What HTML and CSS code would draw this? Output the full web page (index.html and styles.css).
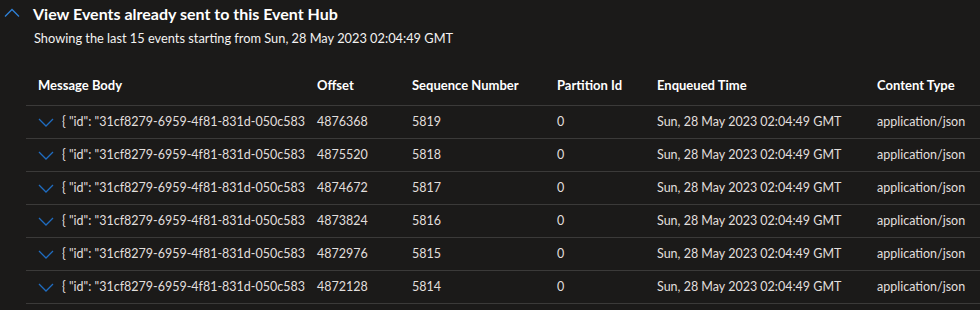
FILE: index.html
```html
<!DOCTYPE html>
<html lang="en">
<head>
  <meta charset="UTF-8" />
  <title>Event Hub events</title>
  <link rel="stylesheet" href="styles.css">
</head>
<body>

  <div class="section-head">
    <svg class="chevron-up" width="16" height="16" viewBox="0 0 16 16"><path d="M1 11.5 L8 4.5 L15 11.5" fill="none" stroke="#2f80d6" stroke-width="1.3"/></svg>
    <h2>View Events already sent to this Event Hub</h2>
  </div>
  <div class="subtitle">Showing the last 15 events starting from Sun, 28 May 2023 02:04:49 GMT</div>

  <table class="events">
    <colgroup>
      <col class="c-body"><col class="c-offset"><col class="c-seq"><col class="c-part"><col class="c-time"><col class="c-type">
    </colgroup>
    <thead>
      <tr>
        <th>Message Body</th>
        <th>Offset</th>
        <th>Sequence Number</th>
        <th>Partition Id</th>
        <th>Enqueued Time</th>
        <th>Content Type</th>
      </tr>
    </thead>
    <tbody id="rows"></tbody>
  </table>

  <script>
    // Build the event rows
    const events = [
      [4876368, 5819], [4875520, 5818], [4874672, 5817],
      [4873824, 5816], [4872976, 5815], [4872128, 5814]
    ];
    const chevron = '<svg class="chevron-down" width="16" height="16" viewBox="0 0 16 16"><path d="M1 5 L8 12 L15 5" fill="none" stroke="#1f6cc0" stroke-width="1.3"/></svg>';
    const rows = document.getElementById('rows');
    events.forEach(([offset, seq]) => {
      const tr = document.createElement('tr');
      tr.innerHTML = `
        <td class="body-td"><div class="body-cell">${chevron}<span>{ "id": "31cf8279-6959-4f81-831d-050c583</span></div></td>
        <td>${offset}</td>
        <td>${seq}</td>
        <td>0</td>
        <td>Sun, 28 May 2023 02:04:49 GMT</td>
        <td>application/json</td>
      `;
      rows.appendChild(tr);
    });
  </script>

</body>
</html>
```

FILE: styles.css
```css
* {
  box-sizing: border-box;
}
body {
  margin: 0;
  background: #1b1a19;
  color: #f3f2f1;
  font-family: 'Segoe UI', 'Lato', 'Liberation Sans', sans-serif;
  font-size: 12.5px;
  overflow: hidden;
}

/* Section header */
.section-head {
  display: flex;
  align-items: center;
  height: 26px;
  padding-left: 4px;
  gap: 13px;
}
.section-head h2 {
  margin: 0;
  font-size: 16px;
  font-weight: 700;
  color: #fff;
}
.subtitle {
  padding-left: 34px;
  margin-top: 4px;
  font-size: 12.8px;
  color: #f3f2f1;
}

/* Table */
.events {
  margin: 22px 0 0 26px;
  width: 954px;
  border-collapse: collapse;
  table-layout: fixed;
}
.c-body { width: 279px; }
.c-offset { width: 95px; }
.c-seq { width: 145px; }
.c-part { width: 100px; }
.c-time { width: 220px; }
.c-type { width: 115px; }

.events th {
  text-align: left;
  font-size: 13px;
  font-weight: 700;
  color: #fff;
  height: 37px;
  padding: 0 12px 3px;
  border-bottom: 1px solid #3b3a39;
  white-space: nowrap;
}
.events td {
  height: 33px;
  padding: 0 12px;
  border-bottom: 1px solid #3b3a39;
  color: #e1dfdd;
  white-space: nowrap;
  overflow: hidden;
}
.events td.body-td {
  padding-right: 0;
}
.body-cell {
  display: flex;
  align-items: center;
  gap: 8px;
  overflow: hidden;
}
.body-cell span {
  overflow: hidden;
  white-space: nowrap;
}
.chevron-down {
  flex: none;
}
```
